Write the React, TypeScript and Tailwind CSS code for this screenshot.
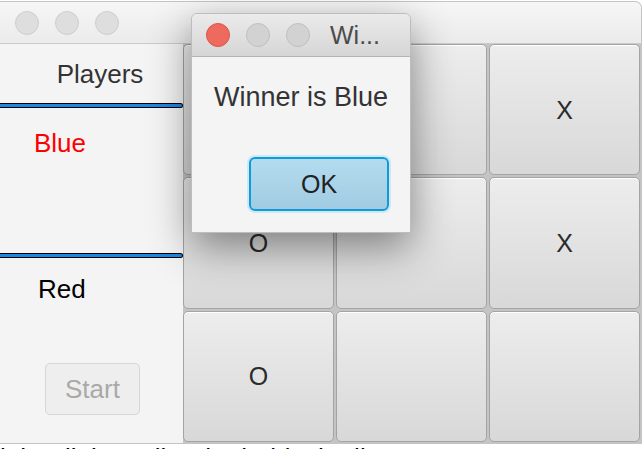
const board = ["", "", "X", "O", "", "X", "O", "", ""];

function Light({ color }: { color: "red" | "dim" | "off" }) {
  const cls =
    color === "red"
      ? "bg-[#ef6a5e] border-[#d9564b]"
      : color === "dim"
        ? "bg-[#d2d2d2] border-[#bfbfbf]"
        : "bg-[#dedede] border-[#cdcdcd]";
  return <span className={`block w-[24px] h-[24px] rounded-full border ${cls}`} />;
}

function Separator() {
  return (
    <div className="h-[5px] w-[187px] -ml-[4px] rounded-r-full border-y-[1.5px] border-r-[1.5px] border-black bg-[#1f86e3]" />
  );
}

function Cell({ mark }: { mark: string }) {
  return (
    <button className="flex items-center justify-center rounded-[5px] border border-[#a4a4a4] bg-gradient-to-b from-[#ededed] to-[#d8d8d8] shadow-[inset_0_1px_0_#ffffff] text-[25px] leading-[30px] text-[#2b2b2b]">
      {mark}
    </button>
  );
}

export default function App() {
  return (
    <div
      className="relative w-[644px] h-[449px] overflow-hidden bg-white"
      style={{ fontFamily: '"Liberation Sans", Arial, sans-serif' }}
    >
      {/* page text peeking above the window */}
      <div className="h-[1px] overflow-hidden">
        <div className="-mt-[24px] pl-[40px] text-[26px] leading-[30px] text-black whitespace-nowrap">
          rows and columns are checked
        </div>
      </div>

      {/* main window */}
      <div className="w-[642px] h-[443px] flex flex-col rounded-tr-[7px] border-t border-r border-b border-[#c4c4c4] bg-[#f4f4f4]">
        <div className="h-[42px] flex items-center gap-[16px] pl-[15px] rounded-tr-[7px] bg-gradient-to-b from-[#f6f6f6] to-[#ebebeb] border-b border-[#cbcbcb]">
          <Light color="off" />
          <Light color="off" />
          <Light color="off" />
        </div>

        <div className="flex flex-1">
          <div className="w-[183px] flex flex-col bg-[#f4f4f4]">
            <div className="pt-[15px] pl-[17px] text-center text-[26px] leading-[30px] text-[#333333]">Players</div>
            <div className="mt-[14px]">
              <Separator />
            </div>
            <div className="mt-[20px] pl-[34px] text-[26px] leading-[30px] text-[#ff0000]">Blue</div>
            <div className="mt-[95px]">
              <Separator />
            </div>
            <div className="mt-[16px] pl-[38px] text-[26px] leading-[30px] text-black">Red</div>
            <div className="mt-[59px] pl-[45px]">
              <button
                disabled
                className="w-[95px] h-[52px] rounded-[5px] border border-[#d6d6d6] bg-[#eeeeee] text-[26px] leading-[30px] text-[#a9a9a9]"
              >
                Start
              </button>
            </div>
          </div>

          <div className="flex-1 grid grid-cols-3 grid-rows-3 gap-[2px] bg-[#c4c4c4] pr-[1px] pb-[1px]">
            {board.map((m, i) => (
              <Cell key={i} mark={m} />
            ))}
          </div>
        </div>
      </div>

      {/* page text peeking below the window */}
      <div className="-mt-[1px] text-[26px] leading-[30px] text-black whitespace-nowrap">
        l the dialog tells who holds the line
      </div>

      {/* winner dialog */}
      <div className="absolute left-[191px] top-[13px] w-[220px] h-[220px] flex flex-col rounded-t-[6px] border border-[#bdbdbd] bg-[#f4f4f4] shadow-[0_14px_42px_rgba(0,0,0,0.45)]">
        <div className="h-[43px] flex items-center pl-[14px] gap-[16px] rounded-t-[6px] bg-gradient-to-b from-[#ebebeb] to-[#d6d6d6] border-b border-[#b4b4b4]">
          <Light color="red" />
          <Light color="dim" />
          <Light color="dim" />
          <span className="ml-[4px] text-[25px] leading-[30px] text-[#4b4b4b]">Wi...</span>
        </div>
        <div className="flex-1 flex flex-col">
          <div className="pt-[25px] text-center text-[27px] leading-[30px] text-[#333333]">Winner is Blue</div>
          <div className="mt-[45px] flex justify-end pr-[21px]">
            <button className="w-[140px] h-[54px] rounded-[6px] border-2 border-[#0e9cd8] bg-gradient-to-b from-[#b4dcef] to-[#a0cbe2] shadow-[0_0_0_2px_#cfe8f4] text-[25px] leading-[30px] text-[#222222]">
              OK
            </button>
          </div>
        </div>
      </div>
    </div>
  );
}
